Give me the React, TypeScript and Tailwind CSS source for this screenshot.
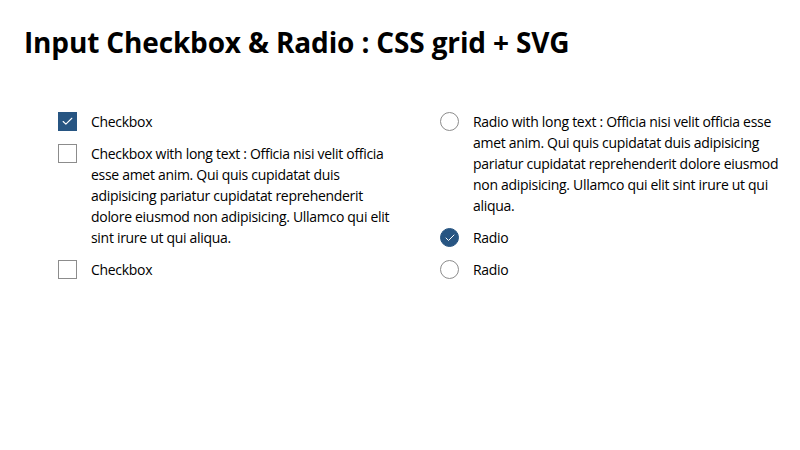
import { Check } from 'lucide-react';

const longText =
  'Officia nisi velit officia esse amet anim. Qui quis cupidatat duis adipisicing pariatur cupidatat reprehenderit dolore eiusmod non adipisicing. Ullamco qui elit sint irure ut qui aliqua.';

function CheckboxItem({ label, checked }: { label: string; checked?: boolean }) {
  return (
    <label className="grid grid-cols-[19px_1fr] gap-x-[14px] items-start">
      <span
        className={`mt-[1px] w-[19px] h-[19px] flex items-center justify-center border ${
          checked ? 'bg-[#275582] border-[#275582]' : 'bg-white border-[#8c8c8c]'
        }`}
      >
        {checked && <Check size={13} strokeWidth={2} className="text-white" />}
      </span>
      <span>{label}</span>
    </label>
  );
}

function RadioItem({ label, checked }: { label: string; checked?: boolean }) {
  return (
    <label className="grid grid-cols-[19px_1fr] gap-x-[14px] items-start">
      <span
        className={`mt-[1px] w-[19px] h-[19px] rounded-full flex items-center justify-center border ${
          checked ? 'bg-[#275582] border-[#275582]' : 'bg-white border-[#8c8c8c]'
        }`}
      >
        {checked && <Check size={12} strokeWidth={2} className="text-white" />}
      </span>
      <span>{label}</span>
    </label>
  );
}

export default function App() {
  return (
    <div className="w-[800px] h-[450px] bg-white text-black font-['Open_Sans',sans-serif]">
      <h1 className="pl-6 pt-[25px] text-[28px] leading-[34px] font-bold tracking-[-0.15px]">
        Input Checkbox &amp; Radio : CSS grid + SVG
      </h1>
      <div className="grid grid-cols-[342px_342px] gap-x-[40px] pl-[58px] mt-[52px] text-[14px] leading-[21px] tracking-[-0.3px]">
        <div className="flex flex-col gap-[11px]">
          <CheckboxItem label="Checkbox" checked />
          <CheckboxItem label={`Checkbox with long text : ${longText}`} />
          <CheckboxItem label="Checkbox" />
        </div>
        <div className="flex flex-col gap-[11px]">
          <RadioItem label={`Radio with long text : ${longText}`} />
          <RadioItem label="Radio" checked />
          <RadioItem label="Radio" />
        </div>
      </div>
    </div>
  );
}
